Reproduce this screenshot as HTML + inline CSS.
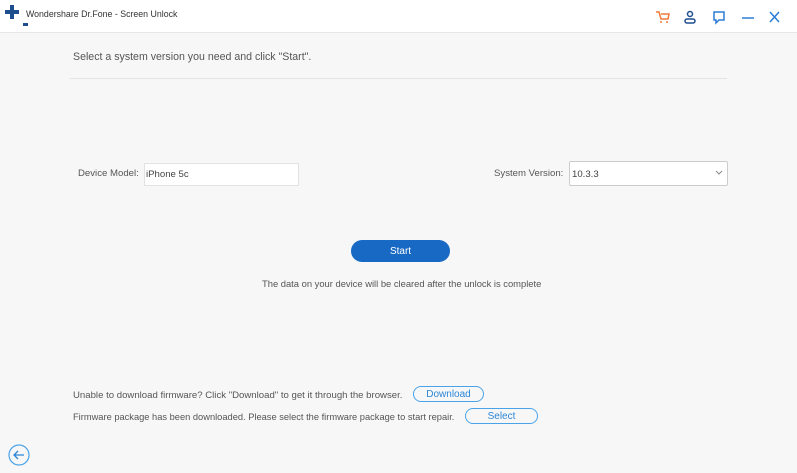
<!DOCTYPE html>
<html><head><style>
body{margin:0;width:797px;height:473px;background:#f7f7f7;font-family:"Liberation Sans",sans-serif;position:relative;overflow:hidden;color:#555}
.a{position:absolute}
.t{font-size:10px;white-space:nowrap}
</style></head><body>
<div class="a" style="left:0;top:0;width:797px;height:32px;background:#fff;border-bottom:1px solid #e6e6e6"></div>
<div class="a" style="left:10px;top:5px;width:4px;height:14px;background:#1f4e8f"></div>
<div class="a" style="left:5px;top:10px;width:14px;height:4px;background:#1f4e8f"></div>
<div class="a" style="left:23px;top:23px;width:5px;height:3px;background:#1f4e8f"></div>
<div class="a t" style="left:26px;top:9px;font-size:8.8px;color:#333">Wondershare Dr.Fone - Screen Unlock</div>
<svg class="a" style="left:650px;top:8px" width="140" height="18" viewBox="0 0 140 18" fill="none" stroke-width="1.5">
<path d="M6 4h3l2 7h7l1-5h-8" stroke="#f07a3a"/><circle cx="11" cy="14" r="1" fill="#f07a3a" stroke="none"/><circle cx="17" cy="14" r="1" fill="#f07a3a" stroke="none"/>
<circle cx="40" cy="6" r="2.5" stroke="#1f4e8f"/><rect x="35" y="11" width="10" height="4" rx="2" stroke="#1f4e8f"/>
<path d="M64 4h10v8h-5l-3 3v-3h-2z" stroke="#2b7dd6"/>
<path d="M92 10h12" stroke="#2b7dd6"/>
<path d="M120 4l9 10M129 4l-9 10" stroke="#2b7dd6"/>
</svg>
<div class="a t" style="left:73px;top:51px;font-size:10.6px;color:#555">Select a system version you need and click "Start".</div>
<div class="a" style="left:70px;top:78px;width:657px;height:1px;background:#e4e4e4"></div>
<div class="a t" style="left:78px;top:168px;font-size:9.6px">Device Model:</div>
<div class="a" style="left:144px;top:163px;width:153px;height:21px;background:#fff;border:1px solid #e2e2e2"></div>
<div class="a t" style="left:146px;top:169px;color:#444;font-size:9.6px">iPhone 5c</div>
<div class="a t" style="left:494px;top:168px;font-size:9.6px">System Version:</div>
<div class="a" style="left:569px;top:161px;width:157px;height:23px;background:#fff;border:1px solid #ccc;border-radius:2px"></div>
<div class="a t" style="left:572px;top:169px;color:#444;font-size:9.6px">10.3.3</div>
<svg class="a" style="left:715px;top:170px" width="8" height="6"><path d="M1 1l3 3 3-3" stroke="#888" fill="none"/></svg>
<div class="a" style="left:351px;top:240px;width:99px;height:22px;background:#1769c4;border-radius:11px;color:#fff;font-size:10px;text-align:center;line-height:23px">Start</div>
<div class="a t" style="left:262px;top:278px;font-size:9.4px">The data on your device will be cleared after the unlock is complete</div>
<div class="a t" style="left:73px;top:390px;font-size:9.6px">Unable to download firmware? Click "Download" to get it through the browser.</div>
<div class="a" style="left:413px;top:386px;width:69px;height:14px;border:1px solid #4aa3e8;border-radius:8px;color:#2b86d6;font-size:10px;text-align:center;line-height:16px">Download</div>
<div class="a t" style="left:73px;top:412px;font-size:9.3px">Firmware package has been downloaded. Please select the firmware package to start repair.</div>
<div class="a" style="left:465px;top:408px;width:71px;height:14px;border:1px solid #4aa3e8;border-radius:8px;color:#2b86d6;font-size:10px;text-align:center;line-height:16px">Select</div>
<svg class="a" style="left:8px;top:444px" width="24" height="24"><circle cx="11" cy="11" r="10" stroke="#4aa3e8" fill="none" stroke-width="1.2"/><path d="M16 11H6M10 7l-4 4 4 4" stroke="#2b86d6" fill="none" stroke-width="1.3"/></svg>
</body></html>
